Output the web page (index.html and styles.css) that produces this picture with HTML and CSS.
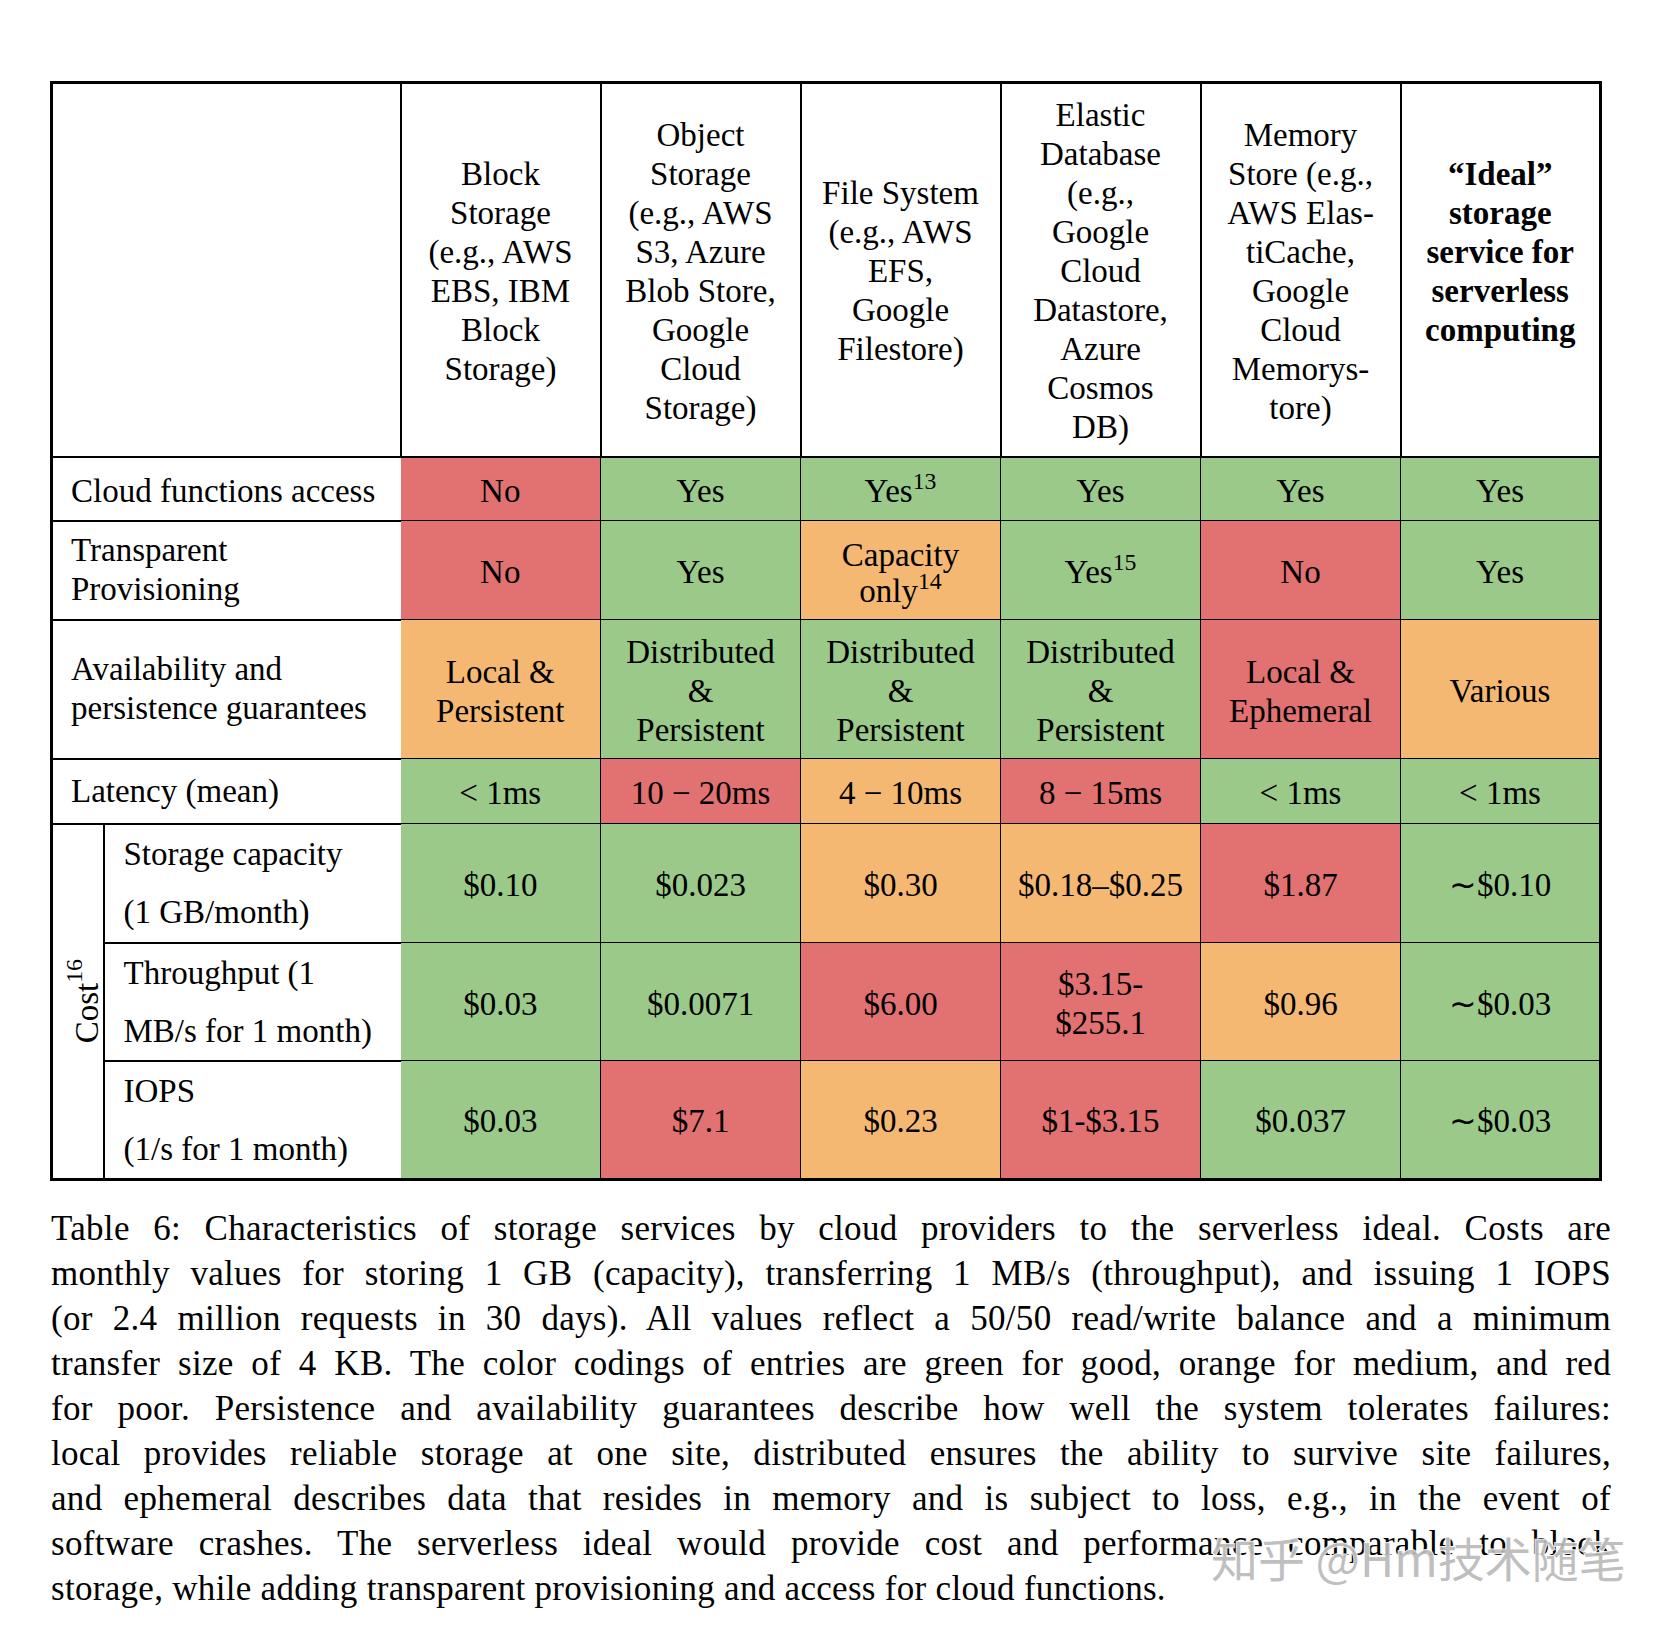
FILE: index.html
```html
<!DOCTYPE html>
<html lang="en">
<head>
<meta charset="utf-8">
<title>Table 6</title>
<link rel="stylesheet" href="styles.css">
</head>
<body>
<div class="page">
  <table class="cmp">
    <colgroup>
      <col class="c-cost"><col class="c-label">
      <col class="c-d"><col class="c-d"><col class="c-d"><col class="c-d"><col class="c-d"><col class="c-d">
    </colgroup>
    <thead>
      <tr class="hdr">
        <th colspan="2" class="corner"></th>
        <th>Block<br>Storage<br>(e.g., AWS<br>EBS, IBM<br>Block<br>Storage)</th>
        <th>Object<br>Storage<br>(e.g., AWS<br>S3, Azure<br>Blob Store,<br>Google<br>Cloud<br>Storage)</th>
        <th>File System<br>(e.g., AWS<br>EFS,<br>Google<br>Filestore)</th>
        <th>Elastic<br>Database<br>(e.g.,<br>Google<br>Cloud<br>Datastore,<br>Azure<br>Cosmos<br>DB)</th>
        <th>Memory<br>Store (e.g.,<br>AWS Elas-<br>tiCache,<br>Google<br>Cloud<br>Memorys-<br>tore)</th>
        <th class="ideal">“Ideal”<br>storage<br>service for<br>serverless<br>computing</th>
      </tr>
    </thead>
    <tbody>
      <tr class="r1">
        <td colspan="2" class="lbl">Cloud functions access</td>
        <td class="v first r">No</td>
        <td class="v g">Yes</td>
        <td class="v g">Yes<span class="sup">13</span></td>
        <td class="v g">Yes</td>
        <td class="v g">Yes</td>
        <td class="v g">Yes</td>
      </tr>
      <tr class="r2">
        <td colspan="2" class="lbl">Transparent<br>Provisioning</td>
        <td class="v first r">No</td>
        <td class="v g">Yes</td>
        <td class="v o tight">Capacity<br>only<span class="sup">14</span></td>
        <td class="v g">Yes<span class="sup">15</span></td>
        <td class="v r">No</td>
        <td class="v g">Yes</td>
      </tr>
      <tr class="r3">
        <td colspan="2" class="lbl">Availability and<br>persistence guarantees</td>
        <td class="v first o">Local &amp;<br>Persistent</td>
        <td class="v g">Distributed<br>&amp;<br>Persistent</td>
        <td class="v g">Distributed<br>&amp;<br>Persistent</td>
        <td class="v g">Distributed<br>&amp;<br>Persistent</td>
        <td class="v r">Local &amp;<br>Ephemeral</td>
        <td class="v o">Various</td>
      </tr>
      <tr class="r4">
        <td colspan="2" class="lbl">Latency (mean)</td>
        <td class="v first g math">&lt; 1ms</td>
        <td class="v r math">10 − 20ms</td>
        <td class="v o math">4 − 10ms</td>
        <td class="v r math">8 − 15ms</td>
        <td class="v g math">&lt; 1ms</td>
        <td class="v g math">&lt; 1ms</td>
      </tr>
      <tr class="r5">
        <td rowspan="3" class="cost"><div class="cost-text">Cost<span class="sup">16</span></div></td>
        <td class="lbl sub">Storage capacity<br>(1 GB/month)</td>
        <td class="v first g">$0.10</td>
        <td class="v g">$0.023</td>
        <td class="v o">$0.30</td>
        <td class="v o">$0.18–$0.25</td>
        <td class="v r">$1.87</td>
        <td class="v g">∼$0.10</td>
      </tr>
      <tr class="r6">
        <td class="lbl sub">Throughput (1<br>MB/s for 1 month)</td>
        <td class="v first g">$0.03</td>
        <td class="v g">$0.0071</td>
        <td class="v r">$6.00</td>
        <td class="v r">$3.15-<br>$255.1</td>
        <td class="v o">$0.96</td>
        <td class="v g">∼$0.03</td>
      </tr>
      <tr class="r7">
        <td class="lbl sub">IOPS<br>(1/s for 1 month)</td>
        <td class="v first g">$0.03</td>
        <td class="v r">$7.1</td>
        <td class="v o">$0.23</td>
        <td class="v r">$1-$3.15</td>
        <td class="v g">$0.037</td>
        <td class="v g">∼$0.03</td>
      </tr>
    </tbody>
  </table>

  <div class="caption">
    <div class="cl">Table 6: Characteristics of storage services by cloud providers to the serverless ideal. Costs are</div>
    <div class="cl">monthly values for storing 1 GB (capacity), transferring 1 MB/s (throughput), and issuing 1 IOPS</div>
    <div class="cl">(or 2.4 million requests in 30 days). All values reflect a 50/50 read/write balance and a minimum</div>
    <div class="cl">transfer size of 4 KB. The color codings of entries are green for good, orange for medium, and red</div>
    <div class="cl">for poor. Persistence and availability guarantees describe how well the system tolerates failures:</div>
    <div class="cl">local provides reliable storage at one site, distributed ensures the ability to survive site failures,</div>
    <div class="cl">and ephemeral describes data that resides in memory and is subject to loss, e.g., in the event of</div>
    <div class="cl">software crashes. The serverless ideal would provide cost and performance comparable to block</div>
    <div class="cl last">storage, while adding transparent provisioning and access for cloud functions.</div>
  </div>

  <div class="watermark">知乎 @Hm技术随笔</div>
</div>
</body>
</html>
```

FILE: styles.css
```css
* { box-sizing: border-box; }
html, body { margin: 0; padding: 0; background: #fff; }
body {
  font-family: "Liberation Serif", "Times New Roman", serif;
  color: #000;
}
.page {
  position: relative;
  width: 1680px;
  height: 1628px;
  padding: 81px 0 0 50px;
  overflow: hidden;
}

/* ---------- table ---------- */
.cmp {
  border-collapse: collapse;
  table-layout: fixed;
  width: 1551px;
  border: 3px solid #000;
  font-size: 33px;
  line-height: 39px;
}
.c-cost { width: 52px; }
.c-label { width: 297px; }
.c-d { width: 200px; }

.cmp th, .cmp td {
  padding: 0;
  text-align: center;
  vertical-align: middle;
  font-weight: normal;
}

.hdr { height: 374px; }
.hdr th {
  border-left: 2px solid #000;
  border-bottom: 2px solid #000;
  padding-top: 4px;
}
.hdr th.ideal {
  font-weight: bold;
  padding-bottom: 39px;
}

.r1 { height: 64px; }
.r2 { height: 99px; }
.r3 { height: 139px; }
.r4 { height: 65px; }
.r5 { height: 119px; }
.r6 { height: 118px; }
.r7 { height: 118px; }

.lbl {
  text-align: left !important;
  padding-left: 18px !important;
  border-bottom: 2px solid #000;
  border-right: hidden;
}
.r1 .lbl { padding-top: 6px !important; }
.lbl.sub {
  padding-left: 19px !important;
  line-height: 58px;
  border-left: 2px solid #000;
}

.cmp td.v {
  border: 1px solid #000;
  padding-top: 5px;
}
.v.first { border-left: hidden; }
.r1 .v { padding-top: 7px; }
.r7 .v { border-top: 2px solid #000; }
.tight { line-height: 36px; }

.g { background: #9bc98a; }
.o { background: #f5b873; }
.r { background: #e27172; }

.sup {
  font-size: 0.72em;
  vertical-align: 0.55em;
  line-height: 0;
}

.cmp td.cost {
  border-bottom: 3px solid #000;
  padding-left: 14px;
}
.cost-text {
  writing-mode: vertical-lr;
  transform: rotate(180deg);
  line-height: 40px;
}

/* ---------- caption ---------- */
.caption {
  width: 1560px;
  margin-top: 25px;
  margin-left: 1px;
  font-size: 35px;
  line-height: 45px;
  letter-spacing: 0.3px;
}
.cl {
  text-align: justify;
  text-align-last: justify;
  white-space: nowrap;
}
.cl.last {
  text-align: left;
  text-align-last: left;
}

/* ---------- watermark overlay ---------- */
.watermark {
  position: absolute;
  left: 1211px;
  top: 1527px;
  font-family: "Noto Sans CJK SC", "Noto Sans", sans-serif;
  font-size: 47px;
  line-height: 60px;
  color: rgba(185, 185, 185, 0.92);
  -webkit-text-stroke: 2px rgba(255, 255, 255, 0.9);
  paint-order: stroke fill;
  white-space: nowrap;
}
```
